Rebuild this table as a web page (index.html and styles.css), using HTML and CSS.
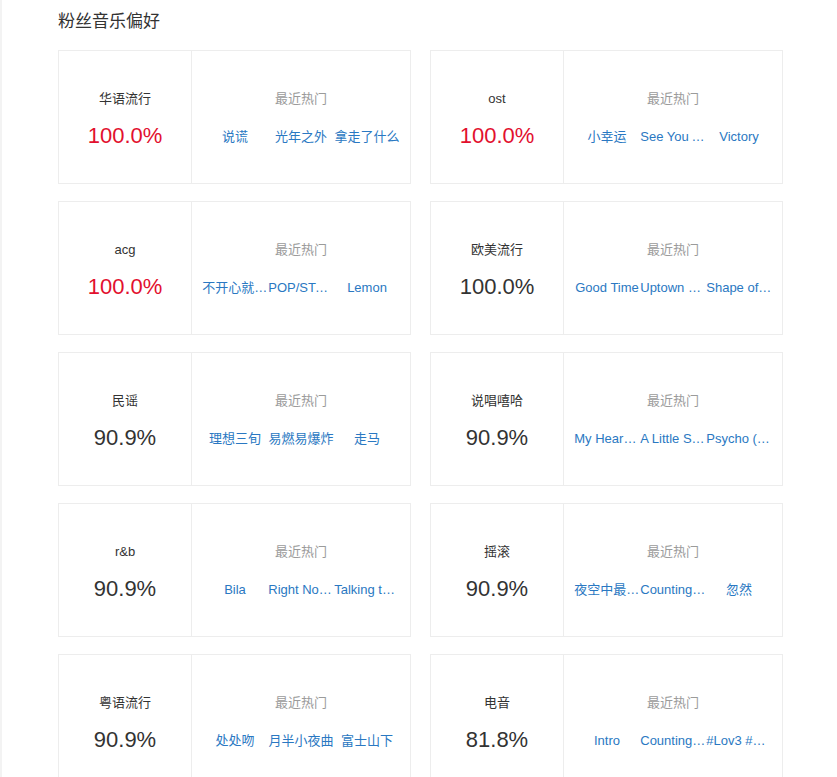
FILE: index.html
```html
<!DOCTYPE html>
<html lang="zh-CN">
<head>
<meta charset="utf-8">
<title>粉丝音乐偏好</title>
<link rel="stylesheet" href="styles.css">
</head>
<body>
<div class="page">
  <h2 class="title">粉丝音乐偏好</h2>
  <div class="grid">
    <div class="card">
      <div class="genre"><div class="name">华语流行</div><div class="pct hot">100.0%</div></div>
      <div class="recent"><div class="recent-title">最近热门</div>
        <div class="songs"><a class="song">说谎</a><a class="song">光年之外</a><a class="song">拿走了什么</a></div></div>
    </div>
    <div class="card">
      <div class="genre"><div class="name">ost</div><div class="pct hot">100.0%</div></div>
      <div class="recent"><div class="recent-title">最近热门</div>
        <div class="songs"><a class="song">小幸运</a><a class="song">See You Again</a><a class="song">Victory</a></div></div>
    </div>
    <div class="card">
      <div class="genre"><div class="name">acg</div><div class="pct hot">100.0%</div></div>
      <div class="recent"><div class="recent-title">最近热门</div>
        <div class="songs"><a class="song">不开心就去旅行</a><a class="song">POP/STARS</a><a class="song">Lemon</a></div></div>
    </div>
    <div class="card">
      <div class="genre"><div class="name">欧美流行</div><div class="pct">100.0%</div></div>
      <div class="recent"><div class="recent-title">最近热门</div>
        <div class="songs"><a class="song">Good Time</a><a class="song">Uptown Funk</a><a class="song">Shape of You</a></div></div>
    </div>
    <div class="card">
      <div class="genre"><div class="name">民谣</div><div class="pct">90.9%</div></div>
      <div class="recent"><div class="recent-title">最近热门</div>
        <div class="songs"><a class="song">理想三旬</a><a class="song">易燃易爆炸</a><a class="song">走马</a></div></div>
    </div>
    <div class="card">
      <div class="genre"><div class="name">说唱嘻哈</div><div class="pct">90.9%</div></div>
      <div class="recent"><div class="recent-title">最近热门</div>
        <div class="songs"><a class="song">My Heart Is Open</a><a class="song">A Little Story</a><a class="song">Psycho (feat. Ty Dolla $ign)</a></div></div>
    </div>
    <div class="card">
      <div class="genre"><div class="name">r&amp;b</div><div class="pct">90.9%</div></div>
      <div class="recent"><div class="recent-title">最近热门</div>
        <div class="songs"><a class="song">Bila</a><a class="song">Right Now (Na Na Na)</a><a class="song">Talking to the Moon</a></div></div>
    </div>
    <div class="card">
      <div class="genre"><div class="name">摇滚</div><div class="pct">90.9%</div></div>
      <div class="recent"><div class="recent-title">最近热门</div>
        <div class="songs"><a class="song">夜空中最亮的星</a><a class="song">Counting Stars</a><a class="song">忽然</a></div></div>
    </div>
    <div class="card">
      <div class="genre"><div class="name">粤语流行</div><div class="pct">90.9%</div></div>
      <div class="recent"><div class="recent-title">最近热门</div>
        <div class="songs"><a class="song">处处吻</a><a class="song">月半小夜曲</a><a class="song">富士山下</a></div></div>
    </div>
    <div class="card">
      <div class="genre"><div class="name">电音</div><div class="pct">81.8%</div></div>
      <div class="recent"><div class="recent-title">最近热门</div>
        <div class="songs"><a class="song">Intro</a><a class="song">Counting Stars</a><a class="song">#Lov3 #Ngẫu Hứng</a></div></div>
    </div>
  </div>
</div>
</body>
</html>
```
FILE: styles.css
```css
html, body {
  margin: 0;
  padding: 0;
  background: #fff;
}
body {
  font-family: "Liberation Sans", "Noto Sans CJK SC", sans-serif;
  color: #333;
}
.page {
  min-height: 100vh;
  border-left: 2px solid #f3f3f3;
  padding: 10px 0 0 56px;
  box-sizing: border-box;
}
.title {
  margin: 0 0 16px 0;
  font-size: 17px;
  line-height: 24px;
  font-weight: normal;
  color: #333;
}
.grid {
  display: grid;
  grid-template-columns: 353px 353px;
  column-gap: 19px;
  row-gap: 17px;
}
.card {
  display: flex;
  height: 134px;
  box-sizing: border-box;
  border: 1px solid #ededed;
  background: #fff;
}
.genre {
  width: 132px;
  flex: none;
  display: flex;
  flex-direction: column;
  align-items: center;
  justify-content: center;
  padding-top: 4px;
  box-sizing: content-box;
  border-right: 1px solid #ededed;
}
.name {
  font-size: 13px;
  line-height: 20px;
  color: #333;
}
.pct {
  margin-top: 14px;
  font-size: 22px;
  line-height: 26px;
  color: #333;
}
.pct.hot {
  color: #e2102e;
}
.recent {
  flex: 1;
  display: flex;
  flex-direction: column;
  justify-content: center;
  padding: 2px 10px 0;
  min-width: 0;
}
.recent-title {
  text-align: center;
  font-size: 13px;
  line-height: 20px;
  color: #9b9b9b;
}
.songs {
  margin-top: 18px;
  display: grid;
  grid-template-columns: repeat(3, 65.5px);
  column-gap: 0.5px;
  justify-content: center;
}
.song {
  display: block;
  font-size: 13px;
  line-height: 20px;
  color: #2a78c2;
  text-align: center;
  white-space: nowrap;
  overflow: hidden;
  text-overflow: ellipsis;
  min-width: 0;
  cursor: pointer;
}
```
